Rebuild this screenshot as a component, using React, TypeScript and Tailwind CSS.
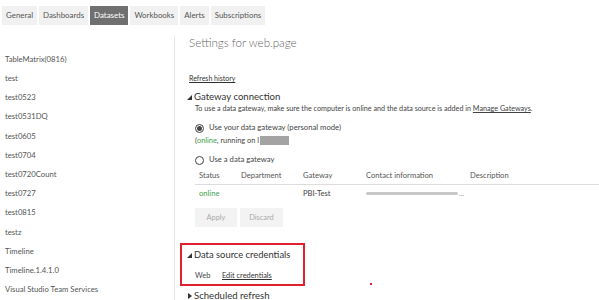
import React from "react";

const tabs = ["General", "Dashboards", "Datasets", "Workbooks", "Alerts", "Subscriptions"];
const datasets = [
  "TableMatrix(0816)",
  "test",
  "test0523",
  "test0531DQ",
  "test0605",
  "test0704",
  "test0720Count",
  "test0727",
  "test0815",
  "testz",
  "Timeline",
  "Timeline.1.4.1.0",
  "Visual Studio Team Services",
];

function Expanded() {
  return (
    <svg width="5" height="5" viewBox="0 0 5 5" className="mr-[2px] shrink-0">
      <polygon points="5,0 5,5 0,5" fill="#333" />
    </svg>
  );
}

function Collapsed() {
  return (
    <svg width="4" height="6" viewBox="0 0 4 6" className="mr-[2px] shrink-0">
      <polygon points="0,0 4,3 0,6" fill="#333" />
    </svg>
  );
}

function Radio({ checked }: { checked?: boolean }) {
  return (
    <span className="w-[9px] h-[9px] rounded-full border border-[#444] flex items-center justify-center shrink-0">
      {checked && <span className="w-[5px] h-[5px] rounded-full bg-[#444]" />}
    </span>
  );
}

export default function App() {
  return (
    <div
      className="w-[599px] h-[300px] bg-white overflow-hidden relative text-[#333]"
      style={{ fontFamily: 'Lato, "Open Sans", sans-serif' }}
    >
      {/* Tabs */}
      <div className="flex gap-[2px] pl-[2px] pt-[6px]">
        {tabs.map((t) => (
          <div
            key={t}
            className={`h-[19px] px-[4px] flex items-center text-[7.9px] ${
              t === "Datasets" ? "bg-[#707070] text-white" : "bg-[#f1f1f1] text-[#555]"
            }`}
          >
            {t}
          </div>
        ))}
      </div>

      <div className="flex mt-[10px]">
        {/* Dataset list */}
        <div className="w-[175px] h-[275px] border-r border-[#e8e8e8] pt-[15px] pl-[5px]">
          {datasets.map((d) => (
            <div key={d} className="h-[19.2px] flex items-center text-[7.7px] text-[#555]">
              {d}
            </div>
          ))}
        </div>

        {/* Settings */}
        <div className="flex-1 pl-[14px] flex flex-col">
          <div className="h-[16px] flex items-center text-[11.6px] font-light text-[#666]">
            Settings for web.page
          </div>
          <div className="mt-[21px] h-[12px] flex items-center text-[7px] underline text-[#333]">
            Refresh history
          </div>

          <div className="mt-[6px] h-[14px] flex items-center -ml-[2px] text-[9.6px] text-[#333]">
            <Expanded />
            Gateway connection
          </div>
          <div className="pl-[6px] flex flex-col">
            <div className="h-[11px] flex items-center text-[7.2px] text-[#444] whitespace-nowrap">
              To use a data gateway, make sure the computer is online and the data source is added in&nbsp;
              <span className="underline">Manage Gateways</span>.
            </div>
            <div className="mt-[7px] h-[12px] flex items-center gap-[5px] text-[7.7px] text-[#444]">
              <Radio checked />
              Use your data gateway (personal mode)
            </div>
            <div className="mt-[1px] h-[11px] flex items-center text-[7.4px] text-[#444] whitespace-nowrap">
              <span>(</span>
              <span className="text-[#3fa34d]">online</span>
              <span>, running on&nbsp;l</span>
              <span className="ml-[1px] w-[29px] h-[9px] bg-[#a3a3a3] shrink-0" />
            </div>
            <div className="mt-[8px] h-[12px] flex items-center gap-[5px] text-[7.7px] text-[#444]">
              <Radio />
              Use a data gateway
            </div>

            <div className="mt-[1px] h-[18px] flex items-center border-b border-[#ddd] text-[7.6px] text-[#555]">
              <span className="w-[46px] pl-[4px]">Status</span>
              <span className="w-[62px]">Department</span>
              <span className="w-[63px]">Gateway</span>
              <span className="w-[104px]">Contact information</span>
              <span>Description</span>
            </div>
            <div className="h-[18px] flex items-center text-[7.6px] text-[#444]">
              <span className="w-[46px] pl-[4px] text-[#3fa34d]">online</span>
              <span className="w-[62px]" />
              <span className="w-[63px]">PBI-Test</span>
              <span className="flex items-center gap-[1px]">
                <span className="w-[92px] h-[3px] bg-[#c8c8c8] rounded-full" />
                <span className="text-[#999]">...</span>
              </span>
            </div>

            <div className="mt-[5px] flex gap-[3px]">
              <div className="w-[42px] h-[19px] bg-[#f3f3f3] flex items-center justify-center text-[7.4px] text-[#aaa]">
                Apply
              </div>
              <div className="w-[43px] h-[19px] bg-[#f3f3f3] flex items-center justify-center text-[7.4px] text-[#aaa]">
                Discard
              </div>
            </div>
          </div>

          {/* Credentials (highlighted) */}
          <div className="mt-[16px] -ml-[9px] w-[125px] h-[43px] border-2 border-[#e0202e] pl-[5px] flex flex-col">
            <div className="mt-[3px] h-[14px] flex items-center text-[9.4px] text-[#333] whitespace-nowrap">
              <Expanded />
              Data source credentials
            </div>
            <div className="mt-[8px] h-[11px] pl-[8px] flex items-center text-[7.4px] text-[#444]">
              <span className="w-[27px]">Web</span>
              <span className="underline text-[#333]">Edit credentials</span>
            </div>
          </div>

          <div className="mt-[3px] h-[14px] flex items-center -ml-[1px] text-[9.6px] text-[#333]">
            <Collapsed />
            Scheduled refresh
          </div>
        </div>
      </div>

      <span className="absolute left-[370px] top-[283px] w-[2px] h-[2px] bg-[#e0202e]" />
    </div>
  );
}
